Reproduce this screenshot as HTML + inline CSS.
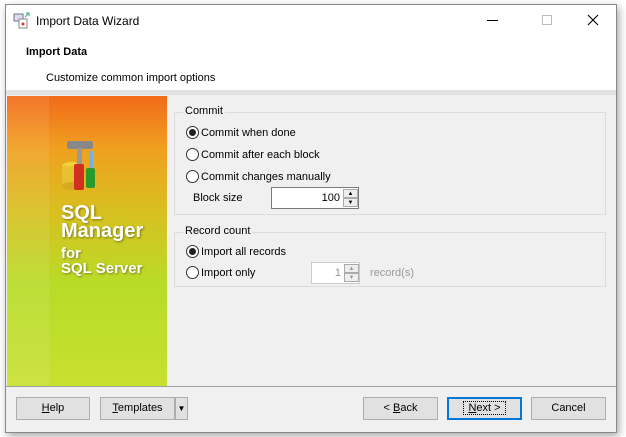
<!DOCTYPE html>
<html><head><style>
*{box-sizing:border-box;margin:0;padding:0}
body{width:626px;height:437px;background:#fff;font-family:"Liberation Sans",Arial,sans-serif;font-size:11px;color:#000;position:relative;overflow:hidden}
.win{position:absolute;left:5px;top:4px;width:612px;height:429px;background:#f0f0f0;border:1px solid #888;box-shadow:2px 3px 8px rgba(0,0,0,.35)}
.title{position:absolute;left:0;top:0;width:610px;height:31px;background:#fff}
.header{position:absolute;left:0;top:31px;width:610px;height:59px;background:#fff;border-bottom:5px solid #e2e2e2}
.abs{position:absolute}
.left{position:absolute;left:1px;top:91px;width:160px;height:290px;background:linear-gradient(180deg,#f26a1a 0%,#f0a020 18%,#d8c020 40%,#b8dc28 65%,#c8e030 100%);overflow:hidden}
.group{position:absolute;border:1px solid #dcdcdc;left:168px;width:432px}
.leg{position:absolute;top:-8px;left:8px;background:#f0f0f0;padding:0 2px}
.radio{position:absolute;width:13px;height:13px;border:1px solid #333;border-radius:50%;background:#fff}
.radio.on::after{content:"";position:absolute;left:2px;top:2px;width:7px;height:7px;border-radius:50%;background:#222}
.btn{position:absolute;top:392px;height:23px;border:1px solid #adadad;background:#e1e1e1;text-align:center;line-height:21px}
.spin{position:absolute;border:1px solid #7a7a7a;background:#fff;text-align:right;padding-right:18px;line-height:20px}
.spin .s{position:absolute;right:0;width:15px;height:9px;border:1px solid #aaa;background:#eee;font-size:6px;line-height:8px;text-align:center}
</style></head><body>
<div class="win">
<div class="title">
 <svg class="abs" style="left:7px;top:6px" width="18" height="18"><rect x="1" y="3" width="9" height="7" fill="#dde" stroke="#678"/><rect x="6" y="8" width="8" height="9" fill="#fff" stroke="#888"/><circle cx="10" cy="13" r="1.5" fill="#d33"/><path d="M12 6 L16 2 M13 2h3v3" stroke="#3a8" fill="none"/></svg>
 <div class="abs" style="left:30px;top:9px;font-size:12px">Import Data Wizard</div>
 <div class="abs" style="left:481px;top:15px;width:11px;height:1px;background:#000"></div>
 <div class="abs" style="left:536px;top:10px;width:10px;height:10px;border:1px solid #bbb"></div>
 <svg class="abs" style="left:581px;top:9px" width="12" height="12"><path d="M1 1L11 11M11 1L1 11" stroke="#000" stroke-width="1.1"/></svg>
</div>
<div class="header">
 <div class="abs" style="left:20px;top:10px;font-weight:bold">Import Data</div>
 <div class="abs" style="left:40px;top:36px">Customize common import options</div>
</div>
<div class="left">
 <div class="abs" style="left:0;top:0;width:42px;height:290px;background:rgba(255,255,255,.08)"></div>
 <svg class="abs" style="left:50px;top:40px" width="50" height="60"><ellipse cx="15" cy="30" rx="10" ry="4" fill="#f3d040"/><rect x="5" y="30" width="20" height="20" fill="#e8c030"/><ellipse cx="15" cy="50" rx="10" ry="4" fill="#d8a820"/><rect x="10" y="5" width="26" height="8" rx="2" fill="#888"/><rect x="20" y="12" width="5" height="22" fill="#999"/><rect x="17" y="28" width="10" height="26" rx="2" fill="#d03020"/><rect x="32" y="15" width="4" height="20" fill="#7ab0e0"/><rect x="29" y="32" width="9" height="20" rx="2" fill="#2a9a2a"/></svg>
 <div class="abs" style="left:54px;top:108px;color:#fff;font-weight:bold;font-size:20px;line-height:18px;text-shadow:1px 1px 2px rgba(0,0,0,.4)">SQL<br>Manager</div>
 <div class="abs" style="left:54px;top:150px;color:#fff;font-weight:bold;font-size:15px;line-height:15px;text-shadow:1px 1px 2px rgba(0,0,0,.4)">for<br>SQL Server</div>
</div>
<div class="group" style="top:107px;height:103px">
 <div class="leg">Commit</div>
 <div class="radio on" style="left:11px;top:13px"></div><div class="abs" style="left:26px;top:14px">Commit when done</div>
 <div class="radio" style="left:11px;top:35px"></div><div class="abs" style="left:26px;top:36px">Commit after each block</div>
 <div class="radio" style="left:11px;top:57px"></div><div class="abs" style="left:26px;top:58px">Commit changes manually</div>
 <div class="abs" style="left:18px;top:79px">Block size</div>
 <div class="spin" style="left:96px;top:74px;width:88px;height:22px">100<div class="s" style="top:1px">▲</div><div class="s" style="top:10px">▼</div></div>
</div>
<div class="group" style="top:227px;height:55px">
 <div class="leg">Record count</div>
 <div class="radio on" style="left:11px;top:12px"></div><div class="abs" style="left:26px;top:13px">Import all records</div>
 <div class="radio" style="left:11px;top:33px"></div><div class="abs" style="left:26px;top:34px">Import only</div>
 <div class="spin" style="left:136px;top:29px;width:49px;height:22px;border-color:#ccc;color:#999">1<div class="s" style="top:1px;color:#999">▲</div><div class="s" style="top:10px;color:#999">▼</div></div>
 <div class="abs" style="left:195px;top:34px;color:#999">record(s)</div>
</div>
<div class="abs" style="left:0;top:381px;width:610px;height:1px;background:#a0a0a0"></div>
<div class="btn" style="left:10px;width:74px"><u>H</u>elp</div>
<div class="btn" style="left:94px;width:75px"><u>T</u>emplates</div>
<div class="btn" style="left:169px;width:13px;font-size:8px">▼</div>
<div class="btn" style="left:357px;width:75px">&lt; <u>B</u>ack</div>
<div class="btn" style="left:441px;width:75px;border:2px solid #0078d7;line-height:19px"><span style="outline:1px dotted #000;padding:0 4px"><u>N</u>ext &gt;</span></div>
<div class="btn" style="left:525px;width:75px">Cancel</div>
</div>
</body></html>
